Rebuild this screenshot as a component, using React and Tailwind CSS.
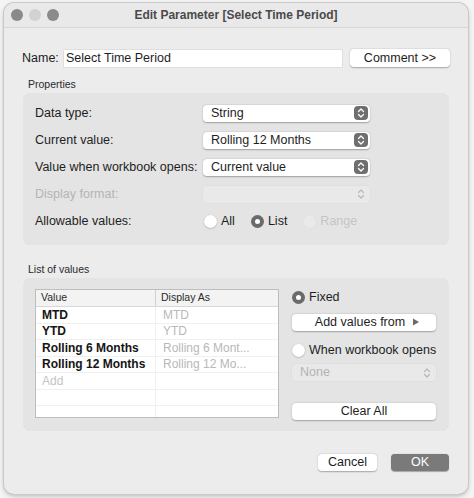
import React from 'react'

const font = { fontFamily: '"Liberation Sans", Arial, sans-serif' }

function Stepper({ disabled }) {
  if (disabled) {
    return (
      <svg width="14" height="14" viewBox="0 0 14 14" className="shrink-0">
        <path d="M4.5 5.5 7 3l2.5 2.5M4.5 8.5 7 11l2.5-2.5" fill="none" stroke="#b8b8b8" strokeWidth="1.2" strokeLinecap="round" strokeLinejoin="round" />
      </svg>
    )
  }
  return (
    <span className="flex h-[14px] w-[14px] shrink-0 items-center justify-center rounded-[4px] bg-[#6f6f6f]">
      <svg width="14" height="14" viewBox="0 0 14 14">
        <path d="M4.5 5.5 7 3l2.5 2.5M4.5 8.5 7 11l2.5-2.5" fill="none" stroke="#fff" strokeWidth="1.3" strokeLinecap="round" strokeLinejoin="round" />
      </svg>
    </span>
  )
}

function Select({ value, disabled, className = '' }) {
  return (
    <div
      className={
        'flex h-[17px] items-center justify-between whitespace-nowrap rounded-[4px] pl-[8px] pr-[2px] text-[12.5px] ' +
        (disabled
          ? 'bg-[#e9e9e9] text-[#b4b4b4] shadow-[0_0_0_0.5px_#dadada] '
          : 'bg-white text-[#1e1e1e] shadow-[0_0.5px_1.5px_rgba(0,0,0,0.3)] ') +
        className
      }
    >
      <span>{value}</span>
      <Stepper disabled={disabled} />
    </div>
  )
}

function Radio({ state }) {
  if (state === 'on') {
    return (
      <span className="flex h-[13px] w-[13px] shrink-0 items-center justify-center rounded-full bg-[#6a6a6a]">
        <span className="h-[5px] w-[5px] rounded-full bg-white" />
      </span>
    )
  }
  if (state === 'disabled') {
    return <span className="h-[13px] w-[13px] shrink-0 rounded-full bg-[#e9e9e9] shadow-[0_0_0_0.5px_#dedede]" />
  }
  return <span className="h-[13px] w-[13px] shrink-0 rounded-full bg-white shadow-[0_0.5px_1.5px_rgba(0,0,0,0.3)]" />
}

function Button({ children, className = '' }) {
  return (
    <div
      className={
        'flex h-[17px] items-center justify-center whitespace-nowrap rounded-[4px] bg-white text-[12.5px] text-[#1e1e1e] shadow-[0_0.5px_1.5px_rgba(0,0,0,0.3)] ' +
        className
      }
    >
      {children}
    </div>
  )
}

const rows = [
  ['MTD', 'MTD'],
  ['YTD', 'YTD'],
  ['Rolling 6 Months', 'Rolling 6 Mont...'],
  ['Rolling 12 Months', 'Rolling 12 Mo...'],
]

const label = 'whitespace-nowrap text-[12.5px] text-[#1e1e1e]'

export default function App() {
  return (
    <div className="h-[498px] w-[474px] bg-[#f4f4f4] pl-[4px] pt-[3px]" style={font}>
      <div className="flex h-[491px] w-[464px] flex-col overflow-hidden rounded-[10px] bg-[#ececec] shadow-[0_0_0_1px_#c9c9c9,0_2px_5px_rgba(0,0,0,0.25)]">
        {/* title bar */}
        <div className="relative flex h-[25px] shrink-0 items-center justify-center border-b border-[#d6d6d6] bg-[#e9e9e9]">
          <div className="absolute left-[7px] top-[6px] flex gap-[6px]">
            <span className="h-[12px] w-[12px] rounded-full bg-[#8a8a8a]" />
            <span className="h-[12px] w-[12px] rounded-full bg-[#d2d2d2]" />
            <span className="h-[12px] w-[12px] rounded-full bg-[#8a8a8a]" />
          </div>
          <span className="text-[12px] font-bold text-[#4a4a4a]">Edit Parameter [Select Time Period]</span>
        </div>

        {/* name row */}
        <div className="mt-[21px] flex h-[18px] items-center pl-[18px]">
          <span className={'w-[42px] ' + label}>Name:</span>
          <div className="flex h-[17px] w-[278px] items-center bg-white pl-[2px] text-[12.5px] text-[#1e1e1e] shadow-[0_0_0_0.5px_#d0d0d0]">
            Select Time Period
          </div>
          <Button className="ml-[8px] h-[18px] w-[100px]">Comment &gt;&gt;</Button>
        </div>

        {/* properties */}
        <div className="mt-[10px] pl-[24px] text-[10.5px] leading-[14px] text-[#2a2a2a]">Properties</div>
        <div className="ml-[20px] mt-[3px] flex h-[150px] w-[424px] flex-col gap-[9px] rounded-[5px] bg-[#e4e4e4] pl-[11px] pt-[10px] shadow-[0_0_0_0.5px_#dcdcdc]">
          <div className="flex h-[18px] items-center">
            <span className={'w-[168px] ' + label}>Data type:</span>
            <Select value="String" className="w-[167px]" />
          </div>
          <div className="flex h-[18px] items-center">
            <span className={'w-[168px] ' + label}>Current value:</span>
            <Select value="Rolling 12 Months" className="w-[167px]" />
          </div>
          <div className="flex h-[18px] items-center">
            <span className={'w-[168px] ' + label}>Value when workbook opens:</span>
            <Select value="Current value" className="w-[167px]" />
          </div>
          <div className="flex h-[18px] items-center">
            <span className="w-[168px] whitespace-nowrap text-[12.5px] text-[#b4b4b4]">Display format:</span>
            <Select value="" disabled className="w-[167px]" />
          </div>
          <div className="flex h-[18px] items-center">
            <span className={'w-[169px] ' + label}>Allowable values:</span>
            <div className="flex items-center gap-[4px]">
              <Radio state="off" />
              <span className={label}>All</span>
            </div>
            <div className="ml-[16px] flex items-center gap-[4px]">
              <Radio state="on" />
              <span className={label}>List</span>
            </div>
            <div className="ml-[16px] flex items-center gap-[4px]">
              <Radio state="disabled" />
              <span className="text-[12.5px] text-[#c4c4c4]">Range</span>
            </div>
          </div>
        </div>

        {/* list of values */}
        <div className="mt-[18px] pl-[24px] text-[10.5px] leading-[14px] text-[#2a2a2a]">List of values</div>
        <div className="ml-[20px] mt-[3px] flex h-[151px] w-[424px] rounded-[5px] bg-[#e4e4e4] pl-[11px] pt-[10px] shadow-[0_0_0_0.5px_#dcdcdc]">
          <div className="flex h-[129px] w-[244px] flex-col overflow-hidden border border-[#bdbdbd] bg-white">
            <div className="flex h-[17px] shrink-0 border-b border-[#d8d8d8] bg-[#f3f3f3] text-[10.5px] text-[#2a2a2a]">
              <span className="flex w-[120px] items-center border-r border-[#d0d0d0] pl-[5px]">Value</span>
              <span className="flex items-center pl-[5px]">Display As</span>
            </div>
            {rows.map(([v, d]) => (
              <div key={v} className="flex h-[16.5px] shrink-0 whitespace-nowrap border-b border-[#f0f0f0] text-[12px]">
                <span className="flex w-[120px] items-center border-r border-[#f0f0f0] pl-[6px] font-semibold text-[#141414]">{v}</span>
                <span className="flex items-center pl-[7px] text-[#b8b8b8]">{d}</span>
              </div>
            ))}
            <div className="flex h-[16.5px] shrink-0 border-b border-[#f0f0f0] text-[12px]">
              <span className="flex w-[120px] items-center border-r border-[#f0f0f0] pl-[6px] text-[#c4c4c4]">Add</span>
            </div>
            <div className="flex h-[16.5px] shrink-0 border-b border-[#f0f0f0]">
              <span className="w-[120px] border-r border-[#f0f0f0]" />
            </div>
            <div className="flex flex-1">
              <span className="w-[120px] border-r border-[#f0f0f0]" />
            </div>
          </div>

          <div className="ml-[13px] flex w-[144px] flex-col">
            <div className="mt-[1px] flex h-[14px] items-center gap-[4px]">
              <Radio state="on" />
              <span className={label}>Fixed</span>
            </div>
            <Button className="relative mt-[10px] h-[16px]">
              <span className="mr-[8px]">Add values from</span>
              <svg width="8" height="8" viewBox="0 0 8 8" className="absolute right-[16px] top-[4px]">
                <path d="M1 0.5 7 4 1 7.5Z" fill="#6a6a6a" />
              </svg>
            </Button>
            <div className="mt-[12px] flex h-[14px] items-center gap-[4px]">
              <Radio state="off" />
              <span className={label}>When workbook opens</span>
            </div>
            <Select value="None" disabled className="mt-[7px]" />
            <Button className="mt-[22px] h-[16px]">Clear All</Button>
          </div>
        </div>

        {/* footer */}
        <div className="mt-[24px] flex justify-end gap-[14px] pr-[19px]">
          <Button className="w-[59px]">Cancel</Button>
          <div className="flex h-[17px] w-[58px] items-center justify-center rounded-[4px] bg-[#7a7a7a] text-[12.5px] text-white shadow-[0_0.5px_1px_rgba(0,0,0,0.3)]">
            OK
          </div>
        </div>
      </div>
    </div>
  )
}
